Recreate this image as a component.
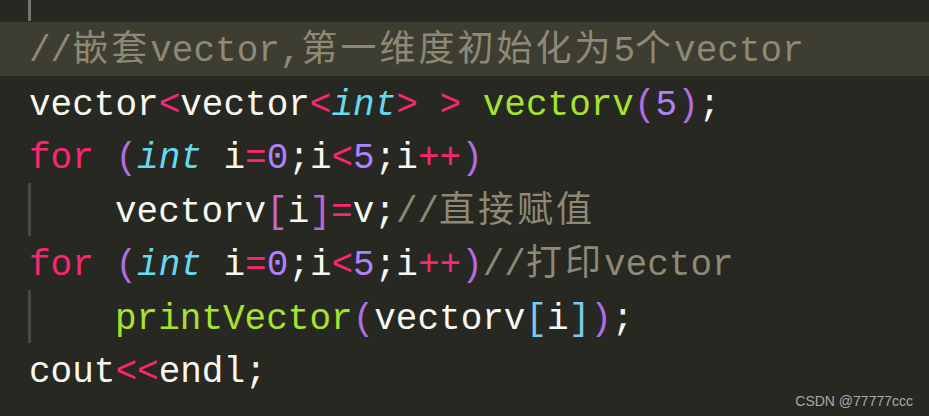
const mono = { fontFamily: '"Liberation Mono", "Noto Sans CJK SC", monospace' };

const Guide = () => <span className="absolute left-[28px] top-0 bottom-0 w-[3px] bg-[#4a4a45]"></span>;

const Cjk = ({ children }) => <span className="tracking-[3px]">{children}</span>;

const P = ({ c, children }) => <span className={c}>{children}</span>;

const Line = ({ hl, guide, indent, children }) => (
    <div className={"relative h-[53.5px] leading-[53.5px] whitespace-pre " + (hl ? "bg-[#3e3d32]" : "")}>
        {guide && <Guide />}
        <div className={"pt-[3px] " + (indent ? "pl-[115px]" : "pl-[29px]")}>{children}</div>
    </div>
);

const App = () => {
    const kw = "text-[#f92672]";
    const ty = "text-[#66d9ef] italic";
    const fn = "text-[#a6e22e]";
    const num = "text-[#ae81ff]";
    const cm = "text-[#8d8975]";
    const par = "text-[#b06ee0]";
    return (
        <div className="w-[929px] h-[416px] bg-[#272822] text-[#f8f8f2] text-[36px] overflow-hidden relative" style={mono}>
            <div className="relative h-[22px]">
                <span className="absolute left-[28px] top-0 h-[21px] w-[3px] bg-[#75746f]"></span>
            </div>
            <Line hl>
                <P c={cm}>//<Cjk>嵌套</Cjk>vector,<Cjk>第一维度初始化为</Cjk>5<Cjk>个</Cjk>vector</P>
            </Line>
            <Line>
                vector<P c={kw}>&lt;</P>vector<P c={kw}>&lt;</P><P c={ty}>int</P><P c={kw}>&gt;</P> <P c={kw}>&gt;</P> <P c={fn}>vectorv</P><P c={par}>(</P><P c={num}>5</P><P c={par}>)</P>;
            </Line>
            <Line>
                <P c={kw}>for</P> <P c={par}>(</P><P c={ty}>int</P> i<P c={kw}>=</P><P c={num}>0</P>;i<P c={kw}>&lt;</P><P c={num}>5</P>;i<P c={kw}>++</P><P c={par}>)</P>
            </Line>
            <Line guide indent>
                vectorv<P c="text-[#c466d0]">[</P>i<P c="text-[#c466d0]">]</P><P c={kw}>=</P>v;<P c={cm}>//<Cjk>直接赋值</Cjk></P>
            </Line>
            <Line>
                <P c={kw}>for</P> <P c={par}>(</P><P c={ty}>int</P> i<P c={kw}>=</P><P c={num}>0</P>;i<P c={kw}>&lt;</P><P c={num}>5</P>;i<P c={kw}>++</P><P c={par}>)</P><P c={cm}>//<Cjk>打印</Cjk>vector</P>
            </Line>
            <Line guide indent>
                <P c={fn}>printVector</P><P c={par}>(</P>vectorv<P c="text-[#7ec8f2]">[</P>i<P c="text-[#7ec8f2]">]</P><P c={par}>)</P>;
            </Line>
            <Line>
                cout<P c={kw}>&lt;&lt;</P>endl;
            </Line>
            <div className="absolute right-[16px] bottom-[8px] text-[14px] leading-none text-[#a9a9a6]" style={{ fontFamily: '"Liberation Sans", Arial, sans-serif' }}>
                CSDN @77777ccc
            </div>
        </div>
    );
};

export default App;
